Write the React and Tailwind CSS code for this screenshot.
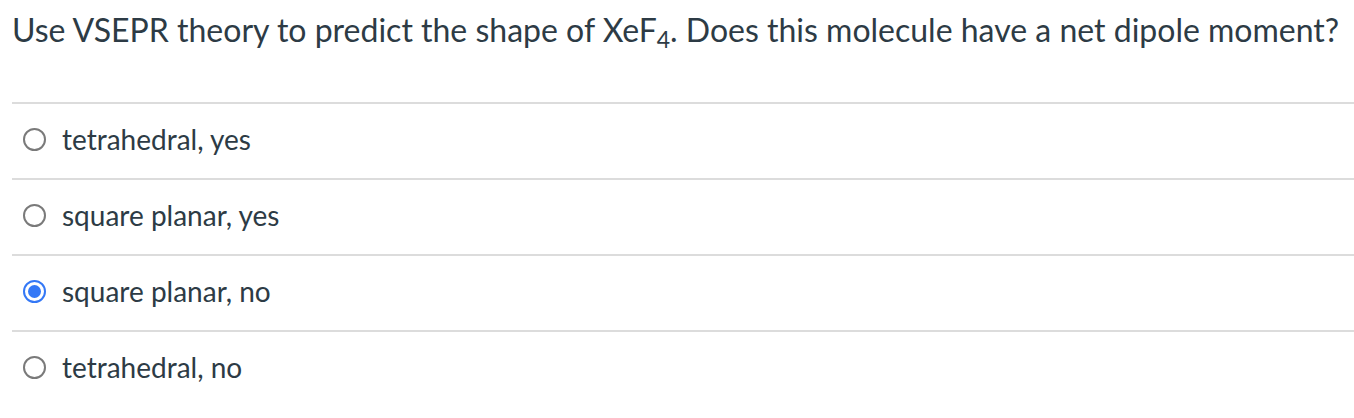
import React from "react";

const options = [
  { label: "tetrahedral, yes", checked: false },
  { label: "square planar, yes", checked: false },
  { label: "square planar, no", checked: true },
  { label: "tetrahedral, no", checked: false },
];

function Radio({ checked }) {
  if (checked) {
    return (
      <span className="flex h-[23px] w-[23px] shrink-0 items-center justify-center rounded-full border-2 border-[#3478f6] bg-white">
        <span className="h-[13px] w-[13px] rounded-full bg-[#3478f6]" />
      </span>
    );
  }
  return <span className="block h-[23px] w-[23px] shrink-0 rounded-full border-2 border-[#7a7a7a] bg-white" />;
}

export default function App() {
  return (
    <div className="h-[418px] w-[1354px] bg-white text-[#2d3b45]" style={{ fontFamily: "Lato, 'Open Sans', sans-serif" }}>
      <div className="flex h-[102px] items-start pl-3 pt-[10px]">
        <p className="text-[32px] leading-[40px]">
          Use VSEPR theory to predict the shape of XeF<sub className="text-[23px] leading-none">4</sub>. Does this molecule have a net dipole moment?
        </p>
      </div>
      <div className="ml-3">
        {options.map((o) => (
          <div key={o.label} className="flex h-[76px] items-center border-t-2 border-[#dcdcdc] pb-[4px]">
            <div className="flex w-[50px] justify-center pr-[6px]">
              <Radio checked={o.checked} />
            </div>
            <span className="text-[28px] leading-[32px]">{o.label}</span>
          </div>
        ))}
      </div>
    </div>
  );
}
